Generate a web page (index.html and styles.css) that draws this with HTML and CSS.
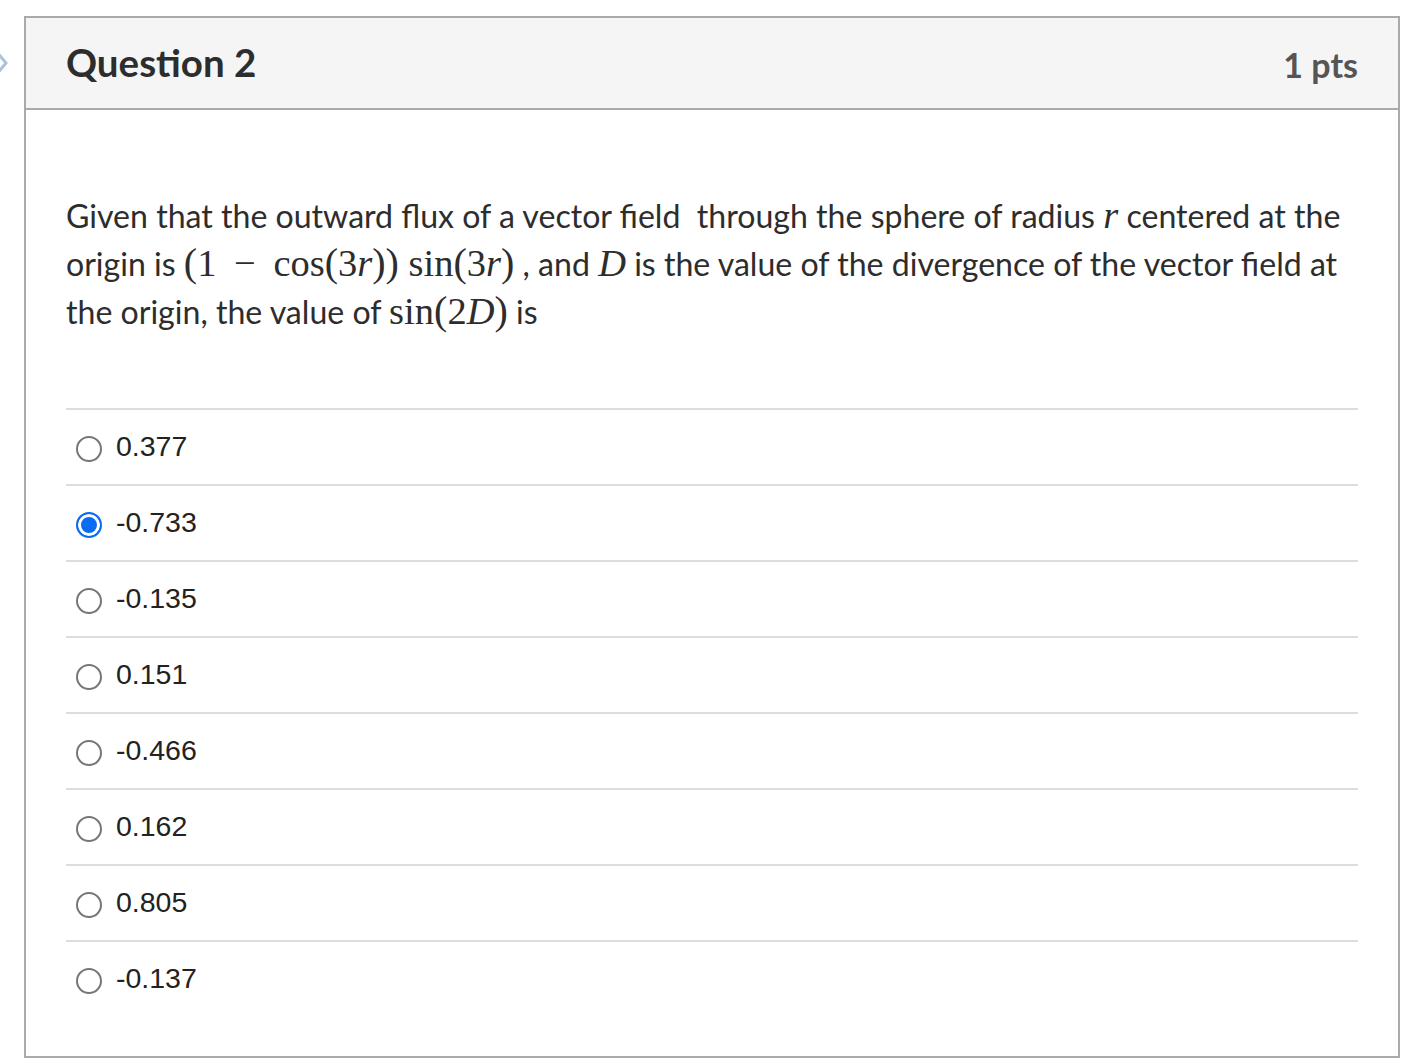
FILE: index.html
```html
<!DOCTYPE html>
<html>
<head>
<meta charset="utf-8">
<link rel="stylesheet" href="styles.css">
</head>
<body>
<svg class="nav-arrow" width="10" height="30" viewBox="0 0 10 30"><path d="M-4 3 L6 15 L-4 27" fill="none" stroke="#a9c4da" stroke-width="3"/></svg>
<div class="question">
  <div class="q-header">
    <h2 class="q-title">Question 2</h2>
    <span class="q-pts">1 pts</span>
  </div>
  <div class="q-body">
    <p class="q-text">Given that the outward flux of a vector field&nbsp; through the sphere of radius <span class="m"><i>r</i></span> centered at the origin is <span class="m"><span class="big">(</span>1 <span class="op">−</span> cos<span class="big">(</span>3<i>r</i><span class="big">))</span> sin<span class="big">(</span>3<i>r</i><span class="big">)</span></span> , and <span class="m"><i>D</i></span> is the value of the divergence of the vector field at the origin, the value of <span class="m">sin<span class="big">(</span>2<i>D</i><span class="big">)</span></span> is</p>
    <div class="answers">
      <div class="answer"><span class="radio"></span><span class="a-text">0.377</span></div>
      <div class="answer"><span class="radio checked"></span><span class="a-text">-0.733</span></div>
      <div class="answer"><span class="radio"></span><span class="a-text">-0.135</span></div>
      <div class="answer"><span class="radio"></span><span class="a-text">0.151</span></div>
      <div class="answer"><span class="radio"></span><span class="a-text">-0.466</span></div>
      <div class="answer"><span class="radio"></span><span class="a-text">0.162</span></div>
      <div class="answer"><span class="radio"></span><span class="a-text">0.805</span></div>
      <div class="answer"><span class="radio"></span><span class="a-text">-0.137</span></div>
    </div>
  </div>
</div>
</body>
</html>
```
FILE: styles.css
```css
html, body {
  margin: 0;
  padding: 0;
  background: #fff;
}
body {
  position: relative;
  padding: 16px 10px 0 24px;
  font-family: Lato, "Noto Sans", sans-serif;
  color: #2d2d2d;
}
.nav-arrow {
  position: absolute;
  left: 0;
  top: 48px;
}
.question {
  width: 1372px;
  height: 1038px;
  border: 2px solid #aaaaaa;
  box-sizing: content-box;
}
.q-header {
  height: 90px;
  background: #f5f5f5;
  border-bottom: 2px solid #aaaaaa;
  display: flex;
  align-items: center;
  justify-content: space-between;
  padding: 0 40px 0 40px;
}
.q-title {
  margin: 0;
  font-size: 38.5px;
  font-weight: 700;
  color: #2d2d2d;
  padding-bottom: 2px;
}
.q-pts {
  font-size: 34px;
  font-weight: 700;
  color: #555555;
  padding-top: 2px;
}
.q-body {
  padding: 82px 40px 0 40px;
}
.q-text {
  margin: 0;
  font-size: 32.1px;
  line-height: 48px;
  height: 144px;
  color: #2d2d2d;
}
.m {
  font-family: "Liberation Serif", "DejaVu Serif", serif;
  font-size: 38.5px;
  line-height: 20px;
}
.m i {
  font-style: italic;
}
.m .big {
  font-size: 40px;
  line-height: 20px;
}
.m .op {
  padding: 0 8px;
}
.answers {
  margin-top: 72px;
}
.answer {
  height: 74px;
  border-top: 2px solid #dddddd;
  display: flex;
  align-items: center;
  padding-left: 10px;
}
.radio {
  width: 22px;
  height: 22px;
  border: 2px solid #777777;
  border-radius: 50%;
  background: #fff;
  flex: none;
  margin-top: 3px;
}
.radio.checked {
  border-color: #0a6cf2;
  background: #0a6cf2;
  box-shadow: inset 0 0 0 3px #fff;
}
.a-text {
  margin-left: 14px;
  margin-bottom: 2px;
  font-family: "Liberation Sans", Arial, sans-serif;
  font-size: 28.5px;
  color: #222222;
}
```
